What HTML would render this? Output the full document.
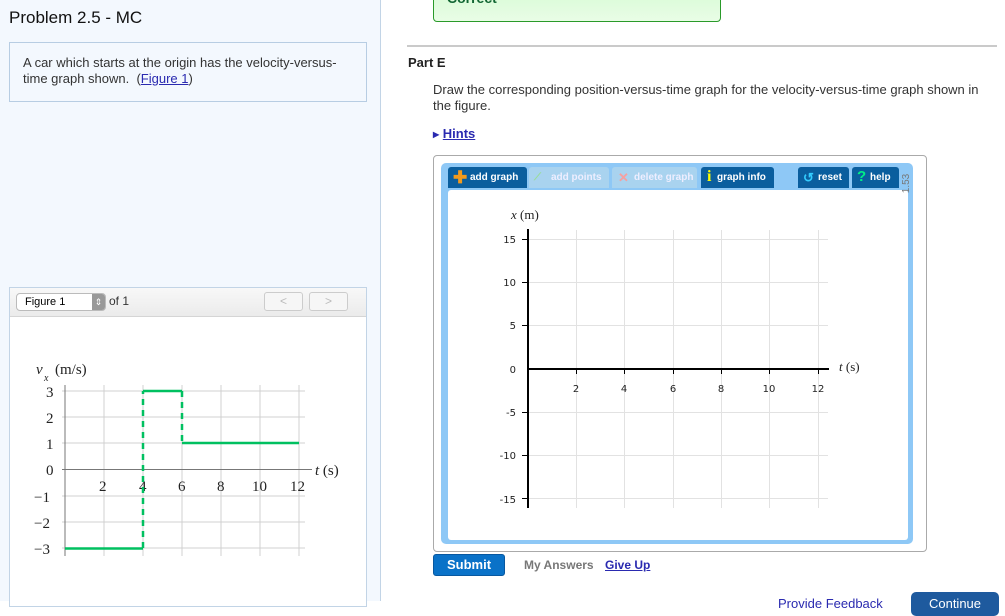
<!DOCTYPE html>
<html><head><meta charset="utf-8"><style>
*{margin:0;padding:0;box-sizing:border-box}
body{width:1005px;height:601px;overflow:hidden;background:#fff;font-family:"Liberation Sans",Arial,sans-serif;position:relative}
.abs{position:absolute}
#left{left:0;top:0;width:381px;height:601px;background:#f3f8fe;border-right:1px solid #c2d4e6}
.btn{position:absolute;top:167px;height:21px;color:#fff;font-size:10px;font-weight:bold;line-height:21px;padding-left:22px;border-radius:3px 3px 0 0}
</style></head><body>
<div id="left" class="abs">
 <div class="abs" style="left:9px;top:8px;font-size:17px;color:#111">Problem 2.5 - MC</div>
 <div class="abs" style="left:9px;top:42px;width:358px;height:60px;border:1px solid #b7cde3;background:#f3f8fe;padding:12px 0 0 13px;font-size:13px;line-height:16px;color:#333">A car which starts at the origin has the velocity-versus-<br>time graph shown. &nbsp;(<span style="color:#2a2ab0;text-decoration:underline">Figure 1</span>)</div>
 <div class="abs" style="left:9px;top:287px;width:358px;height:320px;border:1px solid #c2d4e6;background:#fff">
  <div style="height:29px;background:linear-gradient(#f8f8f8,#ebebeb);border-bottom:1px solid #d5d5d5;position:relative">
   <div class="abs" style="left:6px;top:5px;width:90px;height:18px;border:1px solid #bbb;border-radius:4px;background:#fff;font-size:11px;line-height:16px;padding-left:8px">Figure 1</div>
   <div class="abs" style="left:82px;top:6px;width:13px;height:16px;background:#999;border-radius:0 3px 3px 0;color:#fff;font-size:9px;text-align:center;line-height:16px">⇕</div>
   <div class="abs" style="left:99px;top:6px;font-size:12px;color:#333">of 1</div>
   <div class="abs" style="left:254px;top:4px;width:39px;height:19px;border:1px solid #ccc;border-radius:3px;background:#f6f6f6;color:#bbb;text-align:center;font-size:12px;line-height:17px">&lt;</div>
   <div class="abs" style="left:299px;top:4px;width:39px;height:19px;border:1px solid #ccc;border-radius:3px;background:#f6f6f6;color:#bbb;text-align:center;font-size:12px;line-height:17px">&gt;</div>
  </div>
 </div>
 <svg class="abs" style="left:0;top:0" width="381" height="601">
  <g stroke="#d0d0d0" stroke-width="1">
   <line x1="104" y1="385" x2="104" y2="556"/><line x1="143" y1="385" x2="143" y2="556"/><line x1="182" y1="385" x2="182" y2="556"/><line x1="221" y1="385" x2="221" y2="556"/><line x1="260" y1="385" x2="260" y2="556"/><line x1="299" y1="385" x2="299" y2="556"/>
   <line x1="62" y1="391" x2="305" y2="391"/><line x1="62" y1="417" x2="305" y2="417"/><line x1="62" y1="443" x2="305" y2="443"/><line x1="62" y1="496" x2="305" y2="496"/><line x1="62" y1="522" x2="305" y2="522"/><line x1="62" y1="548" x2="305" y2="548"/>
  </g>
  <line x1="65" y1="385" x2="65" y2="556" stroke="#777"/>
  <line x1="62" y1="469.5" x2="312" y2="469.5" stroke="#777"/>
  <g fill="#222" font-family="Liberation Serif,serif" font-size="15">
   <text x="36" y="374" font-style="italic">v</text><text x="44" y="381" font-size="10" font-style="italic">x</text><text x="55" y="374">(m/s)</text>
   <text x="46" y="397">3</text><text x="46" y="423">2</text><text x="46" y="449">1</text><text x="46" y="475">0</text>
   <text x="34" y="502">−1</text><text x="34" y="528">−2</text><text x="34" y="554">−3</text>
   <text x="99" y="491">2</text><text x="139" y="491">4</text><text x="178" y="491">6</text><text x="217" y="491">8</text><text x="252" y="491">10</text><text x="290" y="491">12</text>
   <text x="315" y="475"><tspan font-style="italic">t</tspan> (s)</text>
  </g>
  <g stroke="#00c060" stroke-width="2.5" fill="none">
   <path d="M65 548.5H143"/><path d="M143 391H182"/><path d="M182 443H299"/>
   <path d="M143 548V391M182 391V443" stroke-dasharray="6,5"/>
  </g>
 </svg>
</div>

<div class="abs" style="left:433px;top:-10px;width:288px;height:32px;border:1px solid #2a9a2a;border-radius:4px;background:linear-gradient(#d8fbd6,#e9fde6);font-size:14px;font-weight:bold;padding:0 0 0 13px;line-height:14px;color:#163">Correct</div>
<div class="abs" style="left:407px;top:45px;width:590px;height:2px;background:#cacaca"></div>
<div class="abs" style="left:408px;top:55px;font-size:13px;font-weight:bold;color:#222">Part E</div>
<div class="abs" style="left:433px;top:82px;font-size:13px;line-height:16px;color:#333">Draw the corresponding position-versus-time graph for the velocity-versus-time graph shown in<br>the figure.</div>
<div class="abs" style="left:433px;top:126px;font-size:13px;font-weight:bold;color:#2a2ab0"><span style="font-size:8px;color:#2a2ab0;vertical-align:1px">▶</span> <u>Hints</u></div>

<div class="abs" style="left:433px;top:155px;width:494px;height:397px;border:1px solid #aaa;border-radius:4px;background:#fff"></div>
<div class="abs" style="left:441px;top:163px;width:472px;height:381px;background:#8ec8f6;border-radius:5px"></div>
<div class="abs" style="left:448px;top:190px;width:460px;height:350px;background:#fff;border-radius:3px"></div>
<div class="btn" style="left:448px;width:79px;background:#0a5e9e"><span class="abs" style="left:5px;top:0;color:#f39a1c;font-size:17px">✚</span>add graph</div>
<div class="btn" style="left:529px;width:80px;background:#a9d3ef;color:#eef"><span class="abs" style="left:5px;top:0;color:#9d9">⟋</span>add points</div>
<div class="btn" style="left:612px;width:85px;background:#a9d3ef;color:#eef"><span class="abs" style="left:6px;top:0;color:#f5a0a0;font-size:13px">✕</span>delete graph</div>
<div class="btn" style="left:701px;width:73px;background:#0a5e9e;padding-left:16px"><span class="abs" style="left:6px;top:-1px;color:#ff0;font-size:16px;font-family:Liberation Serif">i</span>graph info</div>
<div class="btn" style="left:798px;width:51px;background:#0a5e9e;padding-left:20px"><span class="abs" style="left:5px;top:0;color:#3cf;font-size:13px">↺</span>reset</div>
<div class="btn" style="left:852px;width:47px;background:#0a5e9e;padding-left:18px"><span class="abs" style="left:5px;top:-1px;color:#0e8;font-size:15px">?</span>help</div>
<div class="abs" style="left:897px;top:178px;font-size:10px;color:#777;transform:rotate(-90deg)">1.53</div>

<svg class="abs" style="left:0;top:0" width="1005" height="601">
 <g stroke="#e2e2e2">
  <line x1="576.5" y1="230" x2="576.5" y2="508"/><line x1="624.5" y1="230" x2="624.5" y2="508"/><line x1="673.5" y1="230" x2="673.5" y2="508"/><line x1="721.5" y1="230" x2="721.5" y2="508"/><line x1="769.5" y1="230" x2="769.5" y2="508"/><line x1="818.5" y1="230" x2="818.5" y2="508"/>
  <line x1="528" y1="239.5" x2="828" y2="239.5"/><line x1="528" y1="282.5" x2="828" y2="282.5"/><line x1="528" y1="325.5" x2="828" y2="325.5"/><line x1="528" y1="412.5" x2="828" y2="412.5"/><line x1="528" y1="455.5" x2="828" y2="455.5"/><line x1="528" y1="498.5" x2="828" y2="498.5"/>
 </g>
 <line x1="528" y1="229" x2="528" y2="508" stroke="#000" stroke-width="2"/>
 <line x1="527" y1="369" x2="829" y2="369" stroke="#000" stroke-width="2"/>
 <g stroke="#000"><path d="M522 239.5H528M522 282.5H528M522 325.5H528M522 412.5H528M522 455.5H528M522 498.5H528"/><path d="M576.5 369v5M624.5 369v5M673.5 369v5M721.5 369v5M769.5 369v5M818.5 369v5"/></g>
 <g font-family="DejaVu Sans,sans-serif" font-size="10" fill="#222" text-anchor="end">
  <text x="516" y="243">15</text><text x="516" y="286">10</text><text x="516" y="329">5</text><text x="516" y="373">0</text><text x="516" y="416">-5</text><text x="516" y="459">-10</text><text x="516" y="503">-15</text>
 </g>
 <g font-family="DejaVu Sans,sans-serif" font-size="10" fill="#222" text-anchor="middle">
  <text x="576" y="392">2</text><text x="624" y="392">4</text><text x="673" y="392">6</text><text x="721" y="392">8</text><text x="769" y="392">10</text><text x="818" y="392">12</text>
 </g>
 <text x="511" y="219" font-family="Liberation Serif,serif" font-size="13" fill="#222"><tspan font-style="italic">x</tspan> (m)</text>
 <text x="839" y="371" font-family="Liberation Serif,serif" font-size="13" fill="#222"><tspan font-style="italic">t</tspan> (s)</text>
</svg>

<div class="abs" style="left:433px;top:554px;width:72px;height:22px;background:#0a72c8;border:1px solid #0858a0;border-radius:3px;color:#fff;font-size:13px;font-weight:bold;text-align:center;line-height:20px">Submit</div>
<div class="abs" style="left:524px;top:558px;font-size:12px;font-weight:bold;color:#777">My Answers</div>
<div class="abs" style="left:605px;top:558px;font-size:12px;font-weight:bold;color:#2a2ab0;text-decoration:underline">Give Up</div>
<div class="abs" style="left:778px;top:596px;font-size:13px;color:#2a2ab0">Provide Feedback</div>
<div class="abs" style="left:911px;top:592px;width:88px;height:24px;background:#1e5a9e;border-radius:5px;color:#fff;font-size:13px;text-align:center;line-height:24px">Continue</div>
</body></html>
